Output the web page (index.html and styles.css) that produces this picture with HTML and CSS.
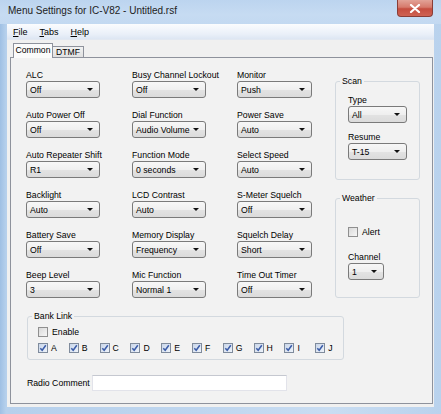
FILE: index.html
```html
<!DOCTYPE html>
<html>
<head>
<meta charset="utf-8">
<link rel="stylesheet" href="styles.css">
</head>
<body>
<div class="window">
  <div class="titlebar">
    <span class="title">Menu Settings for IC-V82 - Untitled.rsf</span>
    <div class="close"><svg width="12" height="9" viewBox="0 0 12 9"><path d="M2 1 L10 8 M10 1 L2 8" stroke="#fff" stroke-width="2.2" stroke-linecap="round"/></svg></div>
  </div>
  <div class="client">
    <div class="menubar">
      <span class="menu"><u>F</u>ile</span>
      <span class="menu"><u>T</u>abs</span>
      <span class="menu"><u>H</u>elp</span>
    </div>
    <div class="tabstrip">
      <div class="tab active">Common</div>
      <div class="tab">DTMF</div>
    </div>
    <div class="panel">
      <div class="grid">
        <div class="col">
          <div class="field"><label>ALC</label><div class="combo"><span class="val">Off</span><span class="arrow"></span></div></div>
          <div class="field"><label>Auto Power Off</label><div class="combo"><span class="val">Off</span><span class="arrow"></span></div></div>
          <div class="field"><label>Auto Repeater Shift</label><div class="combo"><span class="val">R1</span><span class="arrow"></span></div></div>
          <div class="field"><label>Backlight</label><div class="combo"><span class="val">Auto</span><span class="arrow"></span></div></div>
          <div class="field"><label>Battery Save</label><div class="combo"><span class="val">Off</span><span class="arrow"></span></div></div>
          <div class="field"><label>Beep Level</label><div class="combo"><span class="val">3</span><span class="arrow"></span></div></div>
        </div>
        <div class="col">
          <div class="field"><label>Busy Channel Lockout</label><div class="combo"><span class="val">Off</span><span class="arrow"></span></div></div>
          <div class="field"><label>Dial Function</label><div class="combo"><span class="val">Audio Volume</span><span class="arrow"></span></div></div>
          <div class="field"><label>Function Mode</label><div class="combo"><span class="val">0 seconds</span><span class="arrow"></span></div></div>
          <div class="field"><label>LCD Contrast</label><div class="combo"><span class="val">Auto</span><span class="arrow"></span></div></div>
          <div class="field"><label>Memory Display</label><div class="combo"><span class="val">Frequency</span><span class="arrow"></span></div></div>
          <div class="field"><label>Mic Function</label><div class="combo"><span class="val">Normal 1</span><span class="arrow"></span></div></div>
        </div>
        <div class="col">
          <div class="field"><label>Monitor</label><div class="combo wide"><span class="val">Push</span><span class="arrow"></span></div></div>
          <div class="field"><label>Power Save</label><div class="combo wide"><span class="val">Auto</span><span class="arrow"></span></div></div>
          <div class="field"><label>Select Speed</label><div class="combo wide"><span class="val">Auto</span><span class="arrow"></span></div></div>
          <div class="field"><label>S-Meter Squelch</label><div class="combo wide"><span class="val">Off</span><span class="arrow"></span></div></div>
          <div class="field"><label>Squelch Delay</label><div class="combo wide"><span class="val">Short</span><span class="arrow"></span></div></div>
          <div class="field"><label>Time Out Timer</label><div class="combo wide"><span class="val">Off</span><span class="arrow"></span></div></div>
        </div>
        <div class="col groups">
          <fieldset class="group scan">
            <legend>Scan</legend>
            <label class="sublabel first">Type</label>
            <div class="combo small"><span class="val">All</span><span class="arrow"></span></div>
            <label class="sublabel">Resume</label>
            <div class="combo small"><span class="val">T-15</span><span class="arrow"></span></div>
          </fieldset>
          <fieldset class="group weather">
            <legend>Weather</legend>
            <div class="check alert"><span class="box"></span><span>Alert</span></div>
            <label class="sublabel chan">Channel</label>
            <div class="combo tiny"><span class="val">1</span><span class="arrow"></span></div>
          </fieldset>
        </div>
      </div>
      <fieldset class="group bank">
        <legend>Bank Link</legend>
        <div class="check enable"><span class="box"></span><span>Enable</span></div>
        <div class="banks">
          <div class="check"><span class="box on"><svg width="8" height="8" viewBox="0 0 8 8"><path d="M1.3 4.2 L3.2 6.3 L6.8 1.3" fill="none" stroke="#3b5ca8" stroke-width="1.5"/></svg></span><span>A</span></div>
          <div class="check"><span class="box on"><svg width="8" height="8" viewBox="0 0 8 8"><path d="M1.3 4.2 L3.2 6.3 L6.8 1.3" fill="none" stroke="#3b5ca8" stroke-width="1.5"/></svg></span><span>B</span></div>
          <div class="check"><span class="box on"><svg width="8" height="8" viewBox="0 0 8 8"><path d="M1.3 4.2 L3.2 6.3 L6.8 1.3" fill="none" stroke="#3b5ca8" stroke-width="1.5"/></svg></span><span>C</span></div>
          <div class="check"><span class="box on"><svg width="8" height="8" viewBox="0 0 8 8"><path d="M1.3 4.2 L3.2 6.3 L6.8 1.3" fill="none" stroke="#3b5ca8" stroke-width="1.5"/></svg></span><span>D</span></div>
          <div class="check"><span class="box on"><svg width="8" height="8" viewBox="0 0 8 8"><path d="M1.3 4.2 L3.2 6.3 L6.8 1.3" fill="none" stroke="#3b5ca8" stroke-width="1.5"/></svg></span><span>E</span></div>
          <div class="check"><span class="box on"><svg width="8" height="8" viewBox="0 0 8 8"><path d="M1.3 4.2 L3.2 6.3 L6.8 1.3" fill="none" stroke="#3b5ca8" stroke-width="1.5"/></svg></span><span>F</span></div>
          <div class="check"><span class="box on"><svg width="8" height="8" viewBox="0 0 8 8"><path d="M1.3 4.2 L3.2 6.3 L6.8 1.3" fill="none" stroke="#3b5ca8" stroke-width="1.5"/></svg></span><span>G</span></div>
          <div class="check"><span class="box on"><svg width="8" height="8" viewBox="0 0 8 8"><path d="M1.3 4.2 L3.2 6.3 L6.8 1.3" fill="none" stroke="#3b5ca8" stroke-width="1.5"/></svg></span><span>H</span></div>
          <div class="check"><span class="box on"><svg width="8" height="8" viewBox="0 0 8 8"><path d="M1.3 4.2 L3.2 6.3 L6.8 1.3" fill="none" stroke="#3b5ca8" stroke-width="1.5"/></svg></span><span>I</span></div>
          <div class="check"><span class="box on"><svg width="8" height="8" viewBox="0 0 8 8"><path d="M1.3 4.2 L3.2 6.3 L6.8 1.3" fill="none" stroke="#3b5ca8" stroke-width="1.5"/></svg></span><span>J</span></div>
        </div>
      </fieldset>
      <div class="comment">
        <label>Radio Comment</label>
        <div class="textbox"></div>
      </div>
    </div>
  </div>
</div>
</body>
</html>
```

FILE: styles.css
```css
html, body {
  margin: 0;
  padding: 0;
}
body {
  width: 441px;
  height: 414px;
  overflow: hidden;
  font-family: "Liberation Sans", Arial, sans-serif;
  font-size: 8.7px;
  color: #000;
}
.window {
  width: 441px;
  height: 414px;
  box-sizing: border-box;
  padding: 0 7px 7px 7px;
  display: flex;
  flex-direction: column;
  background: linear-gradient(to right, #9fc0e4 0px, #b6d0ec 6px, #bfd6ef 200px, #c9ddf2 330px, #b9d2ed 441px);
}
.titlebar {
  height: 24px;
  margin: 0 -7px;
  padding: 0 8px 0 8px;
  display: flex;
  align-items: flex-start;
  justify-content: space-between;
  background: linear-gradient(to bottom, #bcd4ef, #c6dbf2 60%, #c3d9f1);
}
.title {
  font-size: 10px;
  line-height: 22px;
  color: #222;
}
.close {
  width: 36px;
  height: 17px;
  box-sizing: border-box;
  border: 1px solid #8a3d36;
  border-top: none;
  border-radius: 0 0 4px 4px;
  background: linear-gradient(to bottom, #e2a297 0%, #d67a6c 45%, #c54d3f 55%, #cf6353 100%);
  display: flex;
  align-items: center;
  justify-content: center;
}
.client {
  flex: 1;
  display: flex;
  flex-direction: column;
  background: #f0f0f0;
}
.menubar {
  height: 16px;
  box-sizing: border-box;
  display: flex;
  align-items: center;
  padding-left: 6px;
  gap: 12px;
  font-size: 9px;
  background: linear-gradient(to bottom, #fbfcfe, #e9eff8 70%, #dde6f3);
  border-bottom: 1px solid #e2e8f1;
}
.menu {
  line-height: 14px;
}
.tabstrip {
  height: 17px;
  display: flex;
  align-items: flex-end;
  padding-left: 6px;
  position: relative;
  z-index: 1;
}
.tab {
  box-sizing: border-box;
  border: 1px solid #8e929c;
  border-bottom: none;
  text-align: center;
  font-size: 8.6px;
}
.tab.active {
  width: 40px;
  height: 15px;
  margin-bottom: -1px;
  background: #fbfbfb;
  line-height: 13px;
}
.tab:not(.active) {
  width: 31px;
  height: 11px;
  line-height: 11px;
  border-left: none;
  background: linear-gradient(to bottom, #f2f2f2, #e0e0e0);
}
.panel {
  flex: 1;
  margin: 0 1px 3px 3px;
  border: 1px solid #8e929c;
  background: #f2f2f2;
  display: flex;
  flex-direction: column;
}
.grid {
  display: grid;
  grid-template-columns: 106px 105px 98px 85px;
  padding: 11px 0 0 15px;
}
.col {
  display: flex;
  flex-direction: column;
}
.field {
  height: 40px;
  display: flex;
  flex-direction: column;
}
.field label {
  height: 12px;
  line-height: 13px;
}
.combo {
  width: 74px;
  height: 17px;
  box-sizing: border-box;
  border: 1px solid #7a7a7a;
  border-radius: 3px;
  background: linear-gradient(to bottom, #f7f7f7 0%, #efefef 50%, #e3e3e3 51%, #dbdbdb 100%);
  display: flex;
  align-items: center;
  padding-left: 3px;
}
.combo.wide { width: 75px; }
.combo.small { width: 59px; }
.combo.tiny { width: 36px; }
.val {
  flex: 1;
  white-space: nowrap;
  line-height: 12px;
}
.arrow {
  width: 0;
  height: 0;
  border-left: 3px solid transparent;
  border-right: 3px solid transparent;
  border-top: 3.5px solid #111;
  margin-right: 6px;
}
.group {
  margin: 0;
  border: 1px solid #d3d9df;
  border-radius: 3px;
  box-sizing: border-box;
  padding: 0 0 0 12px;
  min-width: 0;
}
.group legend {
  padding: 0 2px;
  margin-left: -8px;
  line-height: 12px;
  height: 12px;
}
.scan {
  width: 85px;
  height: 105px;
  margin-top: 6px;
}
.sublabel {
  display: block;
  height: 12px;
  line-height: 12px;
  margin-top: 8px;
}
.sublabel.first { margin-top: 7px; }
.weather {
  width: 85px;
  height: 106px;
  margin-top: 12px;
}
.check {
  display: flex;
  align-items: center;
  height: 12px;
  gap: 4px;
}
.box {
  width: 10px;
  height: 10px;
  box-sizing: border-box;
  border: 1px solid #8f8f8f;
  background: linear-gradient(135deg, #d9d9d9, #f6f6f6);
  display: flex;
  align-items: center;
  justify-content: center;
  flex: none;
}
.box.on {
  background: linear-gradient(135deg, #c9d6ea, #eef3fa);
  border-color: #7f8b9c;
}
.alert { margin-top: 22px; }
.sublabel.chan { margin-top: 13px; }
.bank {
  width: 317px;
  height: 50px;
  margin: 1px 0 0 16px;
  padding-left: 10px;
}
.bank legend { margin-left: -6px; }
.enable { margin-top: 4px; }
.banks {
  display: flex;
  margin-top: 4px;
}
.banks .check {
  width: 30.8px;
  flex: none;
  gap: 3px;
}
.comment {
  display: flex;
  align-items: center;
  margin: 15px 0 0 16px;
  height: 16px;
}
.comment label {
  width: 65px;
  flex: none;
  white-space: nowrap;
}
.textbox {
  width: 195px;
  height: 16px;
  box-sizing: border-box;
  background: #fff;
  border: 1px solid #e2e3ea;
  border-top-color: #c5c8d0;
}
```
